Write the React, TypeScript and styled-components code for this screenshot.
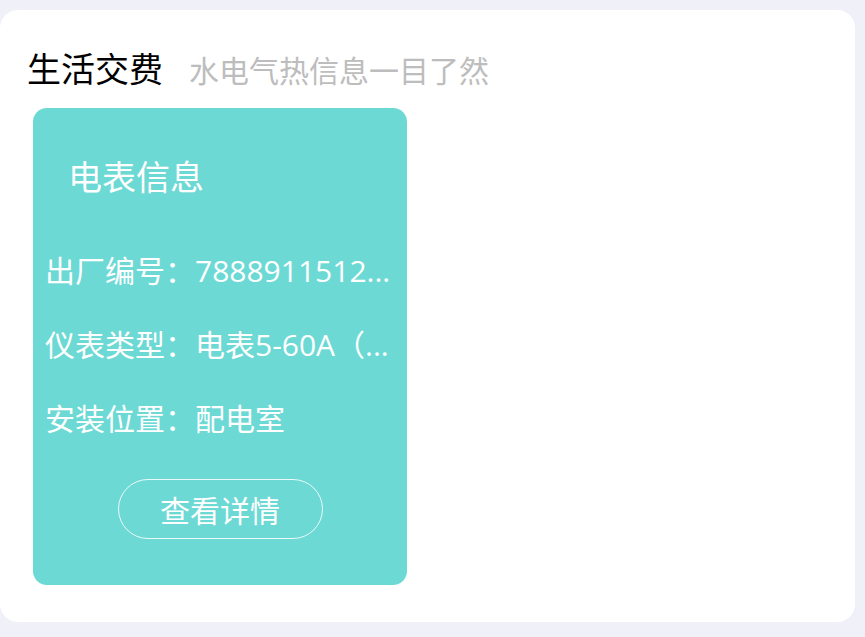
import styled, { createGlobalStyle } from 'styled-components'

const GlobalStyle = createGlobalStyle`
  html, body {
    margin: 0;
    padding: 0;
    background: #f0f0f8;
    font-family: "Microsoft YaHei", "Noto Sans CJK SC", "Noto Sans", sans-serif;
  }
`

const Page = styled.div`
  box-sizing: border-box;
  width: 865px;
  height: 637px;
  padding: 10px 10px 15px 0;
`

const Panel = styled.section`
  box-sizing: border-box;
  height: 100%;
  background: #fff;
  border-radius: 18px;
  padding: 40px 27px 0 27px;
`

const Header = styled.div`
  display: flex;
  align-items: baseline;
  gap: 26px;
  height: 36px;
  line-height: 36px;
  margin-bottom: 22px;
`

const Title = styled.h2`
  margin: 0;
  font-size: 34px;
  font-weight: 400;
  color: #000;
`

const Subtitle = styled.span`
  font-size: 30px;
  color: #bdbdbd;
`

const CardList = styled.div`
  display: flex;
  gap: 20px;
  padding-left: 6px;
`

const Card = styled.div`
  box-sizing: border-box;
  width: 374px;
  height: 477px;
  background: #6cd9d4;
  border-radius: 14px;
  padding: 48px 10px 0 12px;
  color: #fff;
  display: flex;
  flex-direction: column;
`

const CardTitle = styled.div`
  font-size: 34px;
  line-height: 40px;
  padding-left: 23px;
  margin-bottom: 38px;
`

const InfoRow = styled.div`
  font-family: "Open Sans", "Noto Sans CJK SC", sans-serif;
  font-size: 30px;
  height: 74px;
  line-height: 74px;
  white-space: nowrap;
`

const DetailButton = styled.button`
  align-self: center;
  margin-top: 23px;
  margin-left: -2px;
  width: 205px;
  height: 60px;
  border: 1px solid rgba(255, 255, 255, 0.85);
  border-radius: 30px;
  background: transparent;
  color: #fff;
  font-family: inherit;
  font-size: 30px;
  cursor: pointer;
`

interface Meter {
  name: string
  serial: string
  type: string
  location: string
}

const meters: Meter[] = [
  { name: '电表信息', serial: '7888911512...', type: '电表5-60A（...', location: '配电室' },
]

const App = () => {
  return (
    <Page>
      <GlobalStyle />
      <Panel>
        <Header>
          <Title>生活交费</Title>
          <Subtitle>水电气热信息一目了然</Subtitle>
        </Header>
        <CardList>
          {meters.map(m => (
            <Card key={m.serial}>
              <CardTitle>{m.name}</CardTitle>
              <InfoRow>出厂编号：{m.serial}</InfoRow>
              <InfoRow>仪表类型：{m.type}</InfoRow>
              <InfoRow>安装位置：{m.location}</InfoRow>
              <DetailButton>查看详情</DetailButton>
            </Card>
          ))}
        </CardList>
      </Panel>
    </Page>
  )
}

export default App
